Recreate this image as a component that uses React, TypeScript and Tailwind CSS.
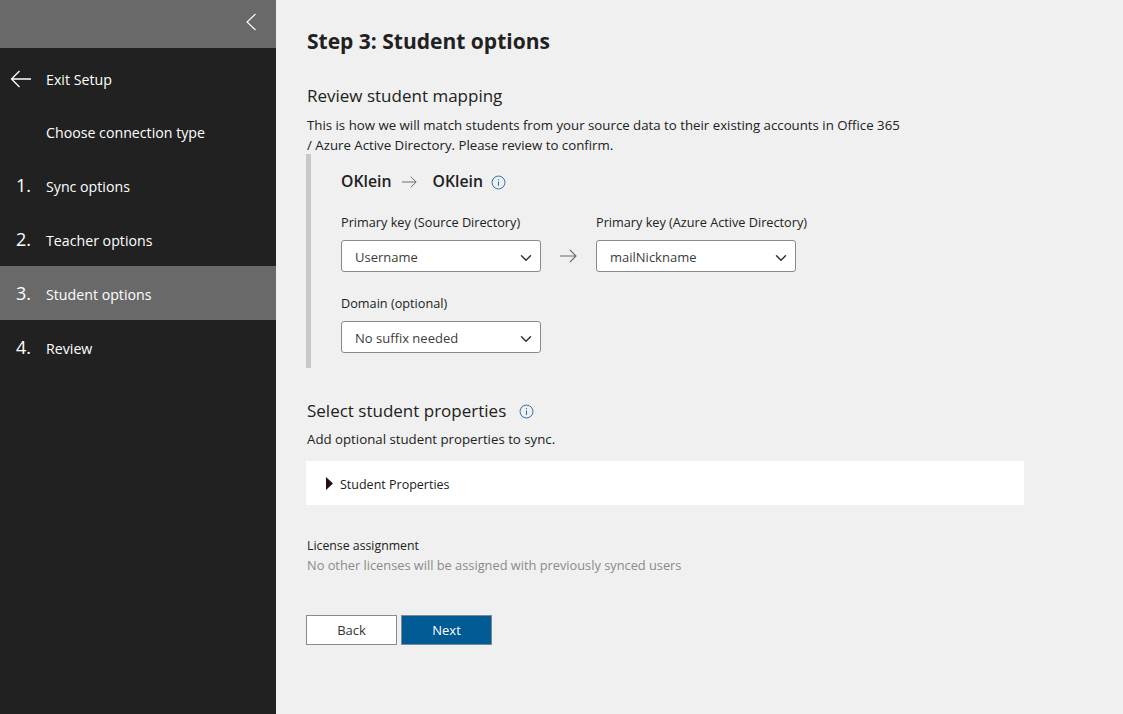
import React from "react"
import { ChevronDown } from "lucide-react"

const font = { fontFamily: '"Open Sans", "Noto Sans", sans-serif' }

const steps = [
  { num: "1.", label: "Sync options" },
  { num: "2.", label: "Teacher options" },
  { num: "3.", label: "Student options", active: true },
  { num: "4.", label: "Review" },
]

function InfoIcon({ className }: { className?: string }) {
  return (
    <svg viewBox="0 0 16 16" className={className} fill="none" stroke="#2a6ca8">
      <circle cx="8" cy="8" r="6.9" strokeWidth="1" />
      <path d="M8 7v4.6" strokeWidth="1.1" />
      <path d="M8 4.4v1.2" strokeWidth="1.2" />
    </svg>
  )
}

function ThinArrow({ className, color }: { className?: string; color: string }) {
  return (
    <svg viewBox="0 0 18 14" className={className} fill="none" stroke={color} strokeWidth="1.1">
      <path d="M1 7h16M11 1l6 6-6 6" />
    </svg>
  )
}

function Select({ value }: { value: string }) {
  return (
    <div className="flex h-8 w-[200px] items-center justify-between rounded-[3px] border border-[#8a8a8a] bg-white pl-[13px] pr-[5px] text-[13px] text-[#3c3c3c]">
      <span className="translate-y-[2px]">{value}</span>
      <ChevronDown className="h-[18px] w-[18px] translate-y-[2px] text-[#333]" strokeWidth={2} />
    </div>
  )
}

export default function App() {
  return (
    <div className="flex h-[714px] w-[1123px] overflow-hidden bg-[#f0f0f0] text-[#212121]" style={font}>
      <aside className="flex w-[276px] shrink-0 flex-col bg-[#212121] text-[14.2px] text-white">
        <div className="flex h-12 items-center justify-end bg-[#696969] pb-1 pr-[20px]">
          <svg viewBox="0 0 10 18" className="h-[18px] w-[10px]" fill="none" stroke="#fff" strokeWidth="1.1">
            <path d="M9.5 1 1 9l8.5 8" />
          </svg>
        </div>
        <div className="mt-[3px] flex h-[54px] items-center pl-[10px] pt-[4px]">
          <svg viewBox="0 0 22 18" className="mr-[14px] h-[18px] w-[22px] -translate-y-px" fill="none" stroke="#fff" strokeWidth="1.3">
            <path d="M21 9H1.5M9.5 1 1.5 9l8 8" />
          </svg>
          <span>Exit Setup</span>
        </div>
        <div className="flex h-[53px] items-center pl-[46px] pt-[2px]">Choose connection type</div>
        {steps.map((step) => (
          <div
            key={step.num}
            className={step.active ? "flex h-[54px] items-center bg-[#696969] pt-[4px]" : "flex h-[54px] items-center pt-[4px]"}
          >
            <span className="w-[46px] -translate-y-[2px] pl-4 text-[18px]">{step.num}</span>
            <span>{step.label}</span>
          </div>
        ))}
      </aside>

      <main className="flex-1 pl-[30px] pt-[26px]">
        <h1 className="ml-px text-[21px] font-bold leading-[30px]">Step 3: Student options</h1>

        <h2 className="ml-px mt-[28px] text-[17px] leading-6">Review student mapping</h2>
        <p className="ml-px mt-[7px] w-[600px] text-[13.25px] leading-5">
          This is how we will match students from your source data to their existing accounts in Office 365 / Azure
          Active Directory. Please review to confirm.
        </p>

        <section className="-mt-px h-[214px] border-l-[5px] border-[#c8c8c8] pl-[30px] pt-[16px]">
          <div className="flex h-6 items-center text-[15.8px] font-semibold">
            <span>OKlein</span>
            <ThinArrow className="ml-[10px] mr-[15px] h-[14px] w-[16px]" color="#6b6b6b" />
            <span>OKlein</span>
            <InfoIcon className="ml-[8px] h-[15px] w-[15px]" />
          </div>
          <div className="mt-[18px] flex items-end">
            <div>
              <label className="block whitespace-nowrap text-[12.7px] leading-5">Primary key (Source Directory)</label>
              <div className="mt-[8px]">
                <Select value="Username" />
              </div>
            </div>
            <div className="flex h-8 w-[55px] items-center justify-center">
              <ThinArrow className="-ml-px h-[14px] w-[18px]" color="#6b6b6b" />
            </div>
            <div>
              <label className="block whitespace-nowrap text-[12.7px] leading-5">Primary key (Azure Active Directory)</label>
              <div className="mt-[8px]">
                <Select value="mailNickname" />
              </div>
            </div>
          </div>
          <label className="mt-[21px] block text-[12.7px] leading-5">Domain (optional)</label>
          <div className="mt-[8px]">
            <Select value="No suffix needed" />
          </div>
        </section>

        <div className="mt-[31px] flex h-6 items-center">
          <h2 className="ml-px text-[17px]">Select student properties</h2>
          <InfoIcon className="ml-[13px] h-[15px] w-[15px]" />
        </div>
        <p className="ml-px mt-[6px] text-[13.25px] leading-5">Add optional student properties to sync.</p>

        <div className="mt-[12px] flex h-[44px] w-[718px] items-center bg-white pl-5 text-[12.5px]">
          <svg viewBox="0 0 7 13" className="mr-[7px] h-[13px] w-[7px]">
            <path d="M0 0l7 6.5L0 13z" fill="#201015" />
          </svg>
          <span className="translate-y-[2px]">Student Properties</span>
        </div>

        <p className="ml-px mt-[31px] text-[12.3px] leading-5">License assignment</p>
        <p className="-mt-px ml-px text-[12.8px] leading-5 text-[#8a8a8a]">No other licenses will be assigned with previously synced users</p>

        <div className="mt-[40px] flex gap-[4px] text-[13px]">
          <button className="h-[30px] w-[91px] border border-[#8a8a8a] bg-white pt-[2px] text-[#333]">Back</button>
          <button className="h-[30px] w-[91px] border border-[#7a8a99] bg-[#005a94] pt-[2px] text-white">Next</button>
        </div>
      </main>
    </div>
  )
}
